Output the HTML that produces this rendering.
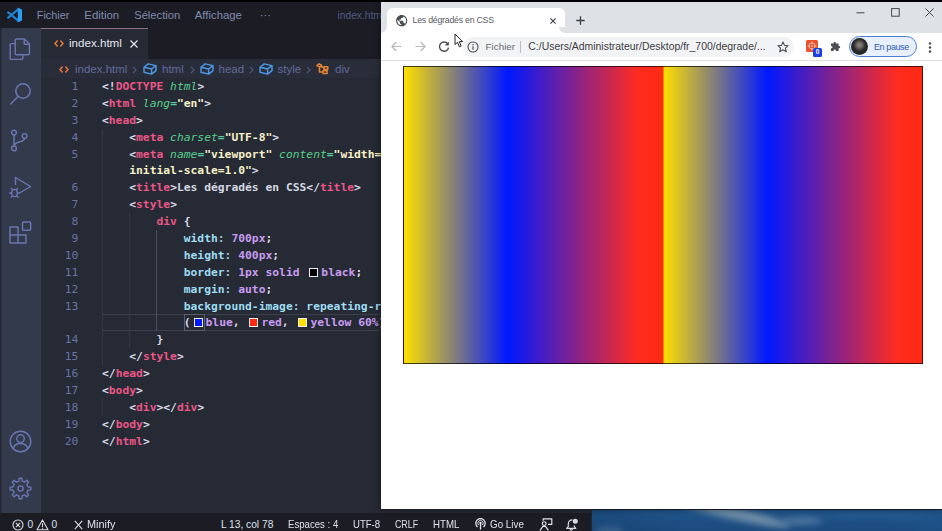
<!DOCTYPE html>
<html lang="fr">
<head>
<meta charset="UTF-8">
<title>Les dégradés en CSS</title>
<style>
*{box-sizing:border-box;margin:0;padding:0}
html,body{width:942px;height:531px;overflow:hidden;background:#000}
body{position:relative;font-family:"Liberation Sans",sans-serif}
.abs{position:absolute}
/* ---------- VS Code ---------- */
#vs{position:absolute;left:0;top:2px;width:600px;height:529px;background:#262a35;overflow:hidden}
#vs-title{position:absolute;left:0;top:0;width:600px;height:26px;background:#1c1d24}
#vs-title span{position:absolute;top:0;line-height:26px;font-size:11.2px;color:#808aaf;white-space:nowrap}
#vs-act{position:absolute;left:0;top:26px;width:41px;height:486px;background:#333a4b;box-shadow:inset 1.5px 0 0 #262732}
#vs-tabs{position:absolute;left:41px;top:26px;width:560px;height:31px;background:#1c1d24}
#vs-tab{position:absolute;left:0;top:0;width:107px;height:31px;background:#262a35;border-top:1px solid #8a6f86}
#vs-bc{position:absolute;left:41px;top:57px;width:560px;height:19.5px;background:#292d39;border-bottom:1px solid #22252e}
#vs-bc span{position:absolute;top:0;line-height:21px;font-size:11.5px;color:#616b9b;white-space:nowrap}
#vs-bc span.ch{font-size:10px;color:#59607f;transform:scaleX(.8);transform-origin:0 50%}
#vs-ed{position:absolute;left:41px;top:76.1px;width:560px;height:435.9px;background:#262a35}
#vs-status{position:absolute;left:0;top:511px;width:591px;height:18px;background:#1c1d24}
#vs-status span{transform-origin:0 50%;position:absolute;top:0;line-height:23.4px;font-size:10.2px;color:#dfe1ea;white-space:nowrap}
#vs-ed{--lh:16.88px}
.row{position:absolute;left:0;width:560px;height:var(--lh);line-height:var(--lh)}
.ln{position:absolute;left:0;top:0;width:37.3px;text-align:right;color:#6873a6;font:11.32px/16.88px "DejaVu Sans Mono","Liberation Mono",monospace}
.cl{position:absolute;left:61px;top:0;white-space:pre;color:#d5d8e3;font:bold 11.32px/16.88px "DejaVu Sans Mono","Liberation Mono",monospace}
.t{color:#ea5686}.a{color:#58cf8a;font-style:italic;font-weight:normal}.s{color:#f6f1c8}.p{color:#d5d8e3}.k{color:#9fdcf2}.v{color:#c79cf0}.e{color:#58c9a0}.k2{color:#8fc6dc}
.sw{display:inline-block;width:9px;height:9px;border:1px solid #eee;vertical-align:-1px;margin:0 3px 0 3px}
.g{position:absolute;width:1px;background:#353846}
.g1{left:61px;top:calc(var(--lh)*3);height:calc(var(--lh)*14)}
.g1b{left:61px;top:calc(var(--lh)*19);height:var(--lh)}
.g2{left:88px;top:calc(var(--lh)*8);height:calc(var(--lh)*8)}
.g3{left:115px;top:calc(var(--lh)*9);height:calc(var(--lh)*6);background:#4b4f60}
.hl{position:absolute;left:61px;top:calc(var(--lh)*14);width:500px;height:var(--lh);border:1px solid #3d404d}
.bm{position:absolute;left:143px;top:calc(var(--lh)*14);width:21px;height:var(--lh);border:1px solid #5a5d6b}
/* ---------- Chrome ---------- */
#ch{position:absolute;left:381px;top:2px;width:561px;height:507px;background:#fff;overflow:hidden}
#chsh{position:absolute;left:381px;top:2px;width:561px;height:507px;box-shadow:0 0 7px rgba(0,0,0,.55)}
#ch-frame{position:absolute;left:0;top:0;width:561px;height:31px;background:#dee1e6}
#ch-tab{position:absolute;left:6px;top:6px;width:178px;height:25px;background:#fff;border-radius:6px 6px 0 0}
#ch-tool{position:absolute;left:0;top:31px;width:561px;height:28px;background:#fff;border-bottom:1px solid #dcdcdc}
#omni{position:absolute;left:82px;top:4px;width:331px;height:20px;border-radius:10px;background:#f2f3f5}
#pill{position:absolute;left:467.5px;top:2.5px;width:68px;height:21px;border-radius:10.5px;border:1px solid #4a7fd6;background:#e9f0fd}
#grad{position:absolute;left:22px;top:64px;width:520px;height:298px;border:1px solid rgba(0,0,0,.7);
 background:repeating-linear-gradient(to right,#ffe000 0,#0018ff 40%,#ff2c20 90%,#ff2a10 100%);background-size:259.5px 100%;}
/* ---------- Desktop ---------- */
#desk{position:absolute;left:591px;top:509px;width:351px;height:22px;border-top:1px solid #1a2230;border-left:1px solid #1b2a40;overflow:hidden;
 background:linear-gradient(to right,rgba(20,60,100,.35),rgba(20,60,100,0) 25%,rgba(20,60,100,0) 80%,rgba(30,90,150,.25)),linear-gradient(to bottom,#21568c,#1b4a7e)}
#desk i{position:absolute;display:block;filter:blur(3px);border-radius:50%}
</style>
</head>
<body>
<div id="vs">
  <div id="vs-title">
    <svg class="abs" style="left:6px;top:5px" width="17" height="16" viewBox="0 0 17 16"><path d="M12 2.6 L2.2 10.6 M12 13.4 L2.2 5.4" stroke="#1b82cf" stroke-width="2.3" stroke-linecap="round"/><path d="M11.6 0.4 L16 2.4 L16 13.6 L11.6 15.6 Z" fill="#2a9df4"/><path d="M11.8 4.6 L11.8 11.4 L7.4 8 Z" fill="#1c1d24"/></svg>
    <span style="left:36.8px;font-size:10.9px">Fichier</span>
    <span style="left:84.3px;font-size:11.4px">Edition</span>
    <span style="left:134.2px">Sélection</span>
    <span style="left:194.8px;font-size:11.35px">Affichage</span>
    <span style="left:259.7px">···</span>
    <span style="left:337.6px;top:1px;font-size:10.2px;color:#525a84">index.html</span>
  </div>
  <div id="vs-act">
    <svg class="abs" style="left:9px;top:10px" width="22" height="23" viewBox="0 0 22 23" fill="none" stroke="#6a77b4" stroke-width="1.4" stroke-linejoin="round"><path d="M7.4 1 L15.4 1 L20.4 6 L20.4 15.6 Q20.4 16.8 19.2 16.8 L7.4 16.8 Q6.2 16.8 6.2 15.6 L6.2 2.2 Q6.2 1 7.4 1 Z"/><path d="M15.2 1.2 L15.2 6.2 L20.2 6.2"/><path d="M6 5.6 L2.4 5.6 Q1.2 5.6 1.2 6.8 L1.2 20.2 Q1.2 21.4 2.4 21.4 L12.6 21.4 Q13.8 21.4 13.8 20.2 L13.8 17"/></svg>
    <svg class="abs" style="left:9px;top:54px" width="23" height="24" viewBox="0 0 23 24" fill="none" stroke="#6a77b4" stroke-width="1.5"><circle cx="14" cy="9" r="7.2"/><path d="M9 14.5 L1.2 22.5"/></svg>
    <svg class="abs" style="left:10px;top:101px" width="19" height="23" viewBox="0 0 19 23" fill="none" stroke="#6a77b4" stroke-width="1.4"><circle cx="4" cy="3.6" r="2.4"/><circle cx="4" cy="19.4" r="2.4"/><circle cx="14.6" cy="7" r="2.4"/><path d="M4 6 L4 17 M14.6 9.4 C14.6 13.5 4 12 4 17"/></svg>
    <svg class="abs" style="left:8px;top:148px" width="24" height="24" viewBox="0 0 24 24" fill="none" stroke="#6a77b4" stroke-width="1.4" stroke-linejoin="round"><path d="M7.5 9 L7.5 1.5 L22.5 10.5 L11.5 17"/><ellipse cx="6.5" cy="17" rx="2.8" ry="3.6"/><path d="M4.6 13.6 L3.2 12 M8.4 13.6 L9.8 12 M3.7 17 L1.2 17 M9.3 17 L11.8 17 M4.4 19.6 L2.6 21.6 M8.6 19.6 L10.4 21.6"/></svg>
    <svg class="abs" style="left:8.5px;top:193px" width="23" height="23" viewBox="0 0 23 23" fill="none" stroke="#6a77b4" stroke-width="1.4" stroke-linejoin="round"><path d="M1 6 L9 6 L9 14 L17 14 L17 22 L1 22 Z M1 14 L9 14 L9 22"/><rect x="13.5" y="1" width="8.2" height="8.2" rx="1"/></svg>
    <svg class="abs" style="left:8.5px;top:401.5px" width="23" height="23" viewBox="0 0 23 23" fill="none" stroke="#6a77b4" stroke-width="1.4"><circle cx="11.5" cy="11.5" r="10.3"/><circle cx="11.5" cy="8.6" r="3.8"/><path d="M4.3 18.8 C5.4 11.8 17.6 11.8 18.7 18.8"/></svg>
    <svg class="abs" style="left:8.5px;top:448.5px" width="23" height="23" viewBox="-11.5 -11.5 23 23" fill="none" stroke="#6a77b4" stroke-width="1.4" stroke-linejoin="round"><circle r="2.6"/><path d="M7.42 -1.66 L10.32 -1.30 L10.32 1.30 L7.42 1.66 L6.42 4.07 L8.22 6.37 L6.37 8.22 L4.07 6.42 L1.66 7.42 L1.30 10.32 L-1.30 10.32 L-1.66 7.42 L-4.07 6.42 L-6.37 8.22 L-8.22 6.37 L-6.42 4.07 L-7.42 1.66 L-10.32 1.30 L-10.32 -1.30 L-7.42 -1.66 L-6.42 -4.07 L-8.22 -6.37 L-6.37 -8.22 L-4.07 -6.42 L-1.66 -7.42 L-1.30 -10.32 L1.30 -10.32 L1.66 -7.42 L4.07 -6.42 L6.37 -8.22 L8.22 -6.37 L6.42 -4.07 Z"/></svg>
  </div>
  <div id="vs-tabs"><div id="vs-tab">
      <svg class="abs" style="left:12.5px;top:10px" width="10" height="9" viewBox="0 0 10 9"><path d="M3.6 1.5 L1 4.5 L3.6 7.5 M6.4 1.5 L9 4.5 L6.4 7.5" fill="none" stroke="#e8743b" stroke-width="1.5"/></svg>
      <span class="abs" id="tabname" style="left:28px;top:0;line-height:28px;font-size:11.6px;color:#e4e6ee;white-space:nowrap">index.html</span>
      <svg class="abs" style="left:88.5px;top:10.5px" width="8" height="8" viewBox="0 0 8 8"><path d="M0.5 0.5 L7.5 7.5 M7.5 0.5 L0.5 7.5" fill="none" stroke="#e4e6ee" stroke-width="1.2"/></svg>
    </div></div>
  <div id="vs-bc">
<svg class="abs" style="left:18px;top:6px" width="10" height="9" viewBox="0 0 10 9"><path d="M3.6 1.5 L1 4.5 L3.6 7.5 M6.4 1.5 L9 4.5 L6.4 7.5" fill="none" stroke="#e8743b" stroke-width="1.5"/></svg>
<span style="left:34px">index.html</span><svg class="abs" style="left:91.2px;top:6.8px" width="5" height="8" viewBox="0 0 5 8"><path d="M0.8 0.8 L4.2 4 L0.8 7.2" fill="none" stroke="#535b7e" stroke-width="1.1"/></svg>
<svg class="abs" style="left:101.5px;top:4px" width="14" height="12" viewBox="0 0 14 12"><path d="M1 4.2 L5.2 0.9 L13 2.6 L13 7.6 L8.6 11.1 L1 9.2 Z M1 4.2 L8.6 6 L13 2.6 M8.6 6 L8.6 11.1" fill="none" stroke="#4a98e8" stroke-width="1.45" stroke-linejoin="round"/></svg><span style="left:121px">html</span><svg class="abs" style="left:148.7px;top:6.8px" width="5" height="8" viewBox="0 0 5 8"><path d="M0.8 0.8 L4.2 4 L0.8 7.2" fill="none" stroke="#535b7e" stroke-width="1.1"/></svg>
<svg class="abs" style="left:158.5px;top:4px" width="14" height="12" viewBox="0 0 14 12"><path d="M1 4.2 L5.2 0.9 L13 2.6 L13 7.6 L8.6 11.1 L1 9.2 Z M1 4.2 L8.6 6 L13 2.6 M8.6 6 L8.6 11.1" fill="none" stroke="#4a98e8" stroke-width="1.45" stroke-linejoin="round"/></svg><span style="left:177.5px">head</span><svg class="abs" style="left:208.2px;top:6.8px" width="5" height="8" viewBox="0 0 5 8"><path d="M0.8 0.8 L4.2 4 L0.8 7.2" fill="none" stroke="#535b7e" stroke-width="1.1"/></svg>
<svg class="abs" style="left:217.5px;top:4px" width="14" height="12" viewBox="0 0 14 12"><path d="M1 4.2 L5.2 0.9 L13 2.6 L13 7.6 L8.6 11.1 L1 9.2 Z M1 4.2 L8.6 6 L13 2.6 M8.6 6 L8.6 11.1" fill="none" stroke="#4a98e8" stroke-width="1.45" stroke-linejoin="round"/></svg><span style="left:236.5px">style</span><svg class="abs" style="left:264.7px;top:6.8px" width="5" height="8" viewBox="0 0 5 8"><path d="M0.8 0.8 L4.2 4 L0.8 7.2" fill="none" stroke="#535b7e" stroke-width="1.1"/></svg>
<svg class="abs" style="left:275px;top:4px" width="13" height="12" viewBox="0 0 13 12"><path d="M1 2.5 L3 0.8 L5.5 2.2 L3.8 4 Z M3.5 3.8 L3.5 9 L7 9 M4.5 3 L8 5 M8 3.8 L11.8 3.8 L11.8 6.4 L8 6.4 Z M7 7.8 L11 7.8 L11 10.6 L7 10.6 Z" fill="none" stroke="#e8862f" stroke-width="1.5" stroke-linejoin="round"/></svg>
<span style="left:294px">div</span>
</div>
  <div id="vs-ed">
<div class="hl"></div><div class="bm"></div>
<div class="g g1"></div><div class="g g1b"></div><div class="g g2"></div><div class="g g3"></div>
<div class="row" style="top:calc(var(--lh)*0)"><span class="ln">1</span><span class="cl"><span class="p">&lt;!</span><span class="t">DOCTYPE</span><span class="a"> html</span><span class="p">&gt;</span></span></div>
<div class="row" style="top:calc(var(--lh)*1)"><span class="ln">2</span><span class="cl"><span class="p">&lt;</span><span class="t">html</span><span class="a"> lang</span><span class="e">=</span><span class="s">"en"</span><span class="p">&gt;</span></span></div>
<div class="row" style="top:calc(var(--lh)*2)"><span class="ln">3</span><span class="cl"><span class="p">&lt;</span><span class="t">head</span><span class="p">&gt;</span></span></div>
<div class="row" style="top:calc(var(--lh)*3)"><span class="ln">4</span><span class="cl">    <span class="p">&lt;</span><span class="t">meta</span><span class="a"> charset</span><span class="e">=</span><span class="s">"UTF-8"</span><span class="p">&gt;</span></span></div>
<div class="row" style="top:calc(var(--lh)*4)"><span class="ln">5</span><span class="cl">    <span class="p">&lt;</span><span class="t">meta</span><span class="a"> name</span><span class="e">=</span><span class="s">"viewport"</span><span class="a"> content</span><span class="e">=</span><span class="s">"width=device-width,</span></span></div>
<div class="row" style="top:calc(var(--lh)*5)"><span class="ln"></span><span class="cl">    <span class="s">initial-scale=1.0"</span><span class="p">&gt;</span></span></div>
<div class="row" style="top:calc(var(--lh)*6)"><span class="ln">6</span><span class="cl">    <span class="p">&lt;</span><span class="t">title</span><span class="p">&gt;Les dégradés en CSS&lt;/</span><span class="t">title</span><span class="p">&gt;</span></span></div>
<div class="row" style="top:calc(var(--lh)*7)"><span class="ln">7</span><span class="cl">    <span class="p">&lt;</span><span class="t">style</span><span class="p">&gt;</span></span></div>
<div class="row" style="top:calc(var(--lh)*8)"><span class="ln">8</span><span class="cl">        <span class="t">div</span><span class="p"> {</span></span></div>
<div class="row" style="top:calc(var(--lh)*9)"><span class="ln">9</span><span class="cl">            <span class="k">width</span><span class="k2">: </span><span class="v">700px</span><span class="p">;</span></span></div>
<div class="row" style="top:calc(var(--lh)*10)"><span class="ln">10</span><span class="cl">            <span class="k">height</span><span class="k2">: </span><span class="v">400px</span><span class="p">;</span></span></div>
<div class="row" style="top:calc(var(--lh)*11)"><span class="ln">11</span><span class="cl">            <span class="k">border</span><span class="k2">: </span><span class="v">1px solid </span><i class="sw" style="background:#000"></i><span class="v">black</span><span class="p">;</span></span></div>
<div class="row" style="top:calc(var(--lh)*12)"><span class="ln">12</span><span class="cl">            <span class="k">margin</span><span class="k2">: </span><span class="v">auto</span><span class="p">;</span></span></div>
<div class="row" style="top:calc(var(--lh)*13)"><span class="ln">13</span><span class="cl">            <span class="k">background-image</span><span class="k2">: </span><span class="k">repeating-radial-gradient</span></span></div>
<div class="row" style="top:calc(var(--lh)*14)"><span class="ln"></span><span class="cl">            <span class="p">(</span><i class="sw" style="background:#0018ff"></i><span class="v">blue</span><span class="p">, </span><i class="sw" style="background:#ff2a10"></i><span class="v">red</span><span class="p">, </span><i class="sw" style="background:#ffe000"></i><span class="v">yellow 60%</span><span class="p">);</span></span></div>
<div class="row" style="top:calc(var(--lh)*15)"><span class="ln">14</span><span class="cl">        <span class="p">}</span></span></div>
<div class="row" style="top:calc(var(--lh)*16)"><span class="ln">15</span><span class="cl">    <span class="p">&lt;/</span><span class="t">style</span><span class="p">&gt;</span></span></div>
<div class="row" style="top:calc(var(--lh)*17)"><span class="ln">16</span><span class="cl"><span class="p">&lt;/</span><span class="t">head</span><span class="p">&gt;</span></span></div>
<div class="row" style="top:calc(var(--lh)*18)"><span class="ln">17</span><span class="cl"><span class="p">&lt;</span><span class="t">body</span><span class="p">&gt;</span></span></div>
<div class="row" style="top:calc(var(--lh)*19)"><span class="ln">18</span><span class="cl">    <span class="p">&lt;</span><span class="t">div</span><span class="p">&gt;&lt;/</span><span class="t">div</span><span class="p">&gt;</span></span></div>
<div class="row" style="top:calc(var(--lh)*20)"><span class="ln">19</span><span class="cl"><span class="p">&lt;/</span><span class="t">body</span><span class="p">&gt;</span></span></div>
<div class="row" style="top:calc(var(--lh)*21)"><span class="ln">20</span><span class="cl"><span class="p">&lt;/</span><span class="t">html</span><span class="p">&gt;</span></span></div>
</div>
  <div id="vs-status">
    <svg class="abs" style="left:12px;top:5.6px" width="12" height="12" viewBox="0 0 12 12"><circle cx="6" cy="6" r="5" fill="none" stroke="#d9dbe4" stroke-width="1.1"/><path d="M3.9 3.9 L8.1 8.1 M8.1 3.9 L3.9 8.1" stroke="#d9dbe4" stroke-width="1.1"/></svg>
    <span style="left:27.5px">0</span>
    <svg class="abs" style="left:36px;top:5.6px" width="13" height="12" viewBox="0 0 13 12"><path d="M6.5 1 L12 10.8 L1 10.8 Z" fill="none" stroke="#d9dbe4" stroke-width="1.1" stroke-linejoin="round"/><path d="M6.5 4.3 L6.5 8 M6.5 8.8 L6.5 9.8" stroke="#d9dbe4" stroke-width="1.1"/></svg>
    <span style="left:51.5px">0</span>
    <svg class="abs" style="left:73.5px;top:6.6px" width="9" height="10" viewBox="0 0 9 10"><path d="M0.8 0.8 L8.2 9.2 M8.2 0.8 L0.8 9.2" stroke="#d9dbe4" stroke-width="1.1"/></svg>
    <span style="left:86.5px;transform:scaleX(1.07)">Minify</span>
    <span style="left:221px">L 13, col 78</span>
    <span style="left:287.5px;transform:scaleX(.945)">Espaces : 4</span>
    <span style="left:353px;transform:scaleX(.94)">UTF-8</span>
    <span style="left:394.7px;transform:scaleX(.865)">CRLF</span>
    <span style="left:432.8px;transform:scaleX(.95)">HTML</span>
    <svg class="abs" style="left:475px;top:5.4px" width="11" height="12" viewBox="0 0 11 12"><circle cx="5.5" cy="5" r="1.2" fill="#e6e8f0"/><path d="M5.5 6 L5.5 11.6" stroke="#e6e8f0" stroke-width="1.3"/><path d="M3.7 7.1 A2.7 2.7 0 1 1 7.3 7.1" fill="none" stroke="#e6e8f0" stroke-width="0.9"/><path d="M2.5 8.9 A4.7 4.7 0 1 1 8.5 8.9" fill="none" stroke="#e6e8f0" stroke-width="1.25"/></svg>
    <span style="left:489.8px;transform:scaleX(.966)">Go Live</span>
    <svg class="abs" style="left:538.5px;top:5.2px" width="14" height="13" viewBox="0 0 14 13"><path d="M4.2 2.8 L4.2 0.8 L12.8 0.8 L12.8 6.4 L9 6.4" fill="none" stroke="#e6e8f0" stroke-width="1.15" stroke-linejoin="round"/><circle cx="5.2" cy="5.6" r="1.9" fill="none" stroke="#e6e8f0" stroke-width="1.15"/><path d="M1 12.4 L3.9 8.3 L6.5 8.3 L9.4 12.4" fill="none" stroke="#e6e8f0" stroke-width="1.15" stroke-linejoin="round"/></svg>
    <svg class="abs" style="left:565px;top:5.1px" width="14" height="13" viewBox="0 0 14 13"><path d="M7.5 1.8 C4.5 1.8 3.3 3.8 3.3 6 L3.3 8.6 L1.6 10.4 L10.8 10.4 L9.3 8.6 L9.3 7.5 M5 10.6 C5 12.6 7.6 12.6 7.6 10.6" fill="none" stroke="#d9dbe4" stroke-width="1.2" stroke-linejoin="round"/><circle cx="10.3" cy="3.3" r="2.5" fill="#d9dbe4"/></svg>
  </div>
</div>
<div id="desk"><i style="left:80px;top:-3px;width:120px;height:12px;background:rgba(130,155,175,.8);transform:rotate(13deg)"></i><i style="left:190px;top:7px;width:40px;height:8px;background:rgba(120,150,178,.55)"></i><i style="left:2px;top:17px;width:30px;height:8px;background:rgba(110,140,175,.4)"></i><i style="left:230px;top:2px;width:110px;height:6px;background:rgba(60,110,160,.35)"></i></div>
<div id="chsh"></div>
<div id="ch">
  <div id="ch-frame">
    <div id="ch-tab">
      <svg class="abs" style="left:7.8px;top:5.8px" width="13.4" height="13.4" viewBox="0 0 24 24"><path fill="#4a4d51" d="M12 2C6.48 2 2 6.48 2 12s4.48 10 10 10 10-4.48 10-10S17.52 2 12 2zm-1 17.93c-3.95-.49-7-3.85-7-7.93 0-.62.08-1.21.21-1.79L9 15v1c0 1.1.9 2 2 2v1.93zm6.9-2.54c-.26-.81-1-1.39-1.9-1.39h-1v-3c0-.55-.45-1-1-1H8v-2h2c.55 0 1-.45 1-1V7h2c1.1 0 2-.9 2-2v-.41c2.93 1.19 5 4.06 5 7.41 0 2.08-.8 3.97-2.1 5.39z"/></svg>
      <span class="abs" style="left:25.5px;top:0;line-height:25px;font-size:8.8px;letter-spacing:-0.25px;color:#5a5d61;white-space:nowrap">Les dégradés en CSS</span>
      <svg class="abs" style="left:162.5px;top:9.5px" width="6" height="6" viewBox="0 0 6 6"><path d="M0.4 0.4 L5.6 5.6 M5.6 0.4 L0.4 5.6" stroke="#3c4043" stroke-width="1.1"/></svg>
    </div>
    <div class="abs" style="left:170px;top:25px;width:14px;height:6px;background:radial-gradient(circle at 100% 0,#dee1e6 5.5px,#fff 6px)"></div>
    <div class="abs" style="left:0px;top:25px;width:6px;height:6px;background:radial-gradient(circle at 0 0,#dee1e6 5.5px,#fff 6px)"></div>
    <svg class="abs" style="left:195px;top:14px" width="9" height="9" viewBox="0 0 9 9"><path d="M4.5 0.3 L4.5 8.7 M0.3 4.5 L8.7 4.5" stroke="#3c4043" stroke-width="1.3"/></svg>
    <svg class="abs" style="left:475px;top:6px" width="9" height="9" viewBox="0 0 9 9"><path d="M0.5 4.8 L8.5 4.8" stroke="#45484c" stroke-width="1"/></svg>
    <svg class="abs" style="left:509.5px;top:6px" width="9" height="9" viewBox="0 0 9 9"><rect x="0.6" y="0.6" width="7.6" height="7.6" fill="none" stroke="#45484c" stroke-width="1"/></svg>
    <svg class="abs" style="left:543.5px;top:6px" width="9" height="9" viewBox="0 0 9 9"><path d="M0.5 0.5 L8.5 8.5 M8.5 0.5 L0.5 8.5" stroke="#45484c" stroke-width="1"/></svg>
  </div>
  <div id="ch-tool">
    <svg class="abs" style="left:10px;top:8px" width="11" height="11" viewBox="0 0 11 11"><path d="M10.5 5.5 L1 5.5 M5.3 1 L0.9 5.5 L5.3 10" fill="none" stroke="#b4b7bb" stroke-width="1.2"/></svg>
    <svg class="abs" style="left:34px;top:8px" width="11" height="11" viewBox="0 0 11 11"><path d="M0.5 5.5 L10 5.5 M5.7 1 L10.1 5.5 L5.7 10" fill="none" stroke="#b4b7bb" stroke-width="1.2"/></svg>
    <svg class="abs" style="left:57px;top:7.5px" width="12" height="12" viewBox="0 0 12 12"><path d="M10 3.2 A4.6 4.6 0 1 0 10.6 6.6" fill="none" stroke="#4a4d51" stroke-width="1.4"/><path d="M10.8 0.6 L10.8 4.6 L6.8 4.6 Z" fill="#4a4d51"/></svg>
    <div id="omni">
      <svg class="abs" style="left:4.3px;top:4px" width="12" height="12" viewBox="0 0 12 12"><circle cx="6" cy="6" r="5" fill="none" stroke="#4f5256" stroke-width="1.1"/><path d="M6 5.2 L6 8.8 M6 3 L6 4.2" stroke="#4f5256" stroke-width="1.2"/></svg>
      <span class="abs" style="left:22.5px;top:0;line-height:20px;font-size:9.9px;color:#686b70;white-space:nowrap">Fichier</span>
      <div class="abs" style="left:57px;top:4px;width:1px;height:12px;background:#b9bcc0"></div>
      <span class="abs" style="left:65.3px;top:0;line-height:20px;font-size:10.44px;color:#3d4043;white-space:nowrap">C:/Users/Administrateur/Desktop/fr_700/degrade/...</span>
      <svg class="abs" style="left:314px;top:4px" width="12" height="12" viewBox="0 0 12 12"><path d="M6 1 L7.5 4.4 L11.2 4.7 L8.4 7.1 L9.3 10.8 L6 8.8 L2.7 10.8 L3.6 7.1 L0.8 4.7 L4.5 4.4 Z" fill="none" stroke="#4f5256" stroke-width="1.1" stroke-linejoin="round"/></svg>
    </div>
    <div class="abs" style="left:424.5px;top:7px;width:12px;height:12px;background:#e9522c;border-radius:1.5px"></div>
    <svg class="abs" style="left:425.5px;top:8px" width="10" height="10" viewBox="0 0 10 10"><circle cx="5" cy="5" r="3" fill="none" stroke="#f8c9bc" stroke-width="0.9"/><circle cx="5" cy="5" r="1" fill="#f8c9bc"/><path d="M5 0.5 L5 2.5 M5 7.5 L5 9.5 M0.5 5 L2.5 5 M7.5 5 L9.5 5" stroke="#f8c9bc" stroke-width="0.8"/></svg>
    <div class="abs" style="left:432px;top:15px;width:9px;height:8.5px;background:#1b3fe2;border-radius:1.5px;color:#fff;font-size:6.5px;font-weight:bold;line-height:8.5px;text-align:center">0</div>
    <svg class="abs" style="left:448.5px;top:7px" width="12" height="12" viewBox="0 0 12 12"><path d="M1 3.6 L3.6 3.6 C3 1.4 6.4 1.4 5.8 3.6 L8.6 3.6 L8.6 6 C10.8 5.4 10.8 8.8 8.6 8.2 L8.6 11 L5.9 11 C6.5 8.9 3 8.9 3.6 11 L1 11 L1 8.3 C3 8.8 3 5.6 1 6.1 Z" fill="#4a4d51"/></svg>
    <div id="pill">
      <div class="abs" style="left:1.5px;top:1.5px;width:17px;height:17px;border-radius:50%;background:radial-gradient(circle at 50% 42%,#8f8a86 0,#6b6662 22%,#2b2a2a 45%,#1d1d1f 100%)"></div>
      <span class="abs" style="left:24.5px;top:0;line-height:20px;font-size:9px;letter-spacing:-0.4px;color:#2b5cb3;white-space:nowrap">En pause</span>
    </div>
    <svg class="abs" style="left:546.5px;top:8.5px" width="4" height="11" viewBox="0 0 4 11"><circle cx="2" cy="1.5" r="1.2" fill="#4a4d51"/><circle cx="2" cy="5.5" r="1.2" fill="#4a4d51"/><circle cx="2" cy="9.5" r="1.2" fill="#4a4d51"/></svg>
  </div>
  <div id="grad"></div>
</div>
<svg class="abs" style="left:454px;top:33px" width="10" height="15" viewBox="0 0 10 15"><path d="M1 1 L1 11.6 L3.5 9.3 L5.4 13.8 L7.2 13 L5.3 8.7 L8.7 8.6 Z" fill="#fff" stroke="#222" stroke-width="1" stroke-linejoin="round"/></svg>
</body>
</html>
